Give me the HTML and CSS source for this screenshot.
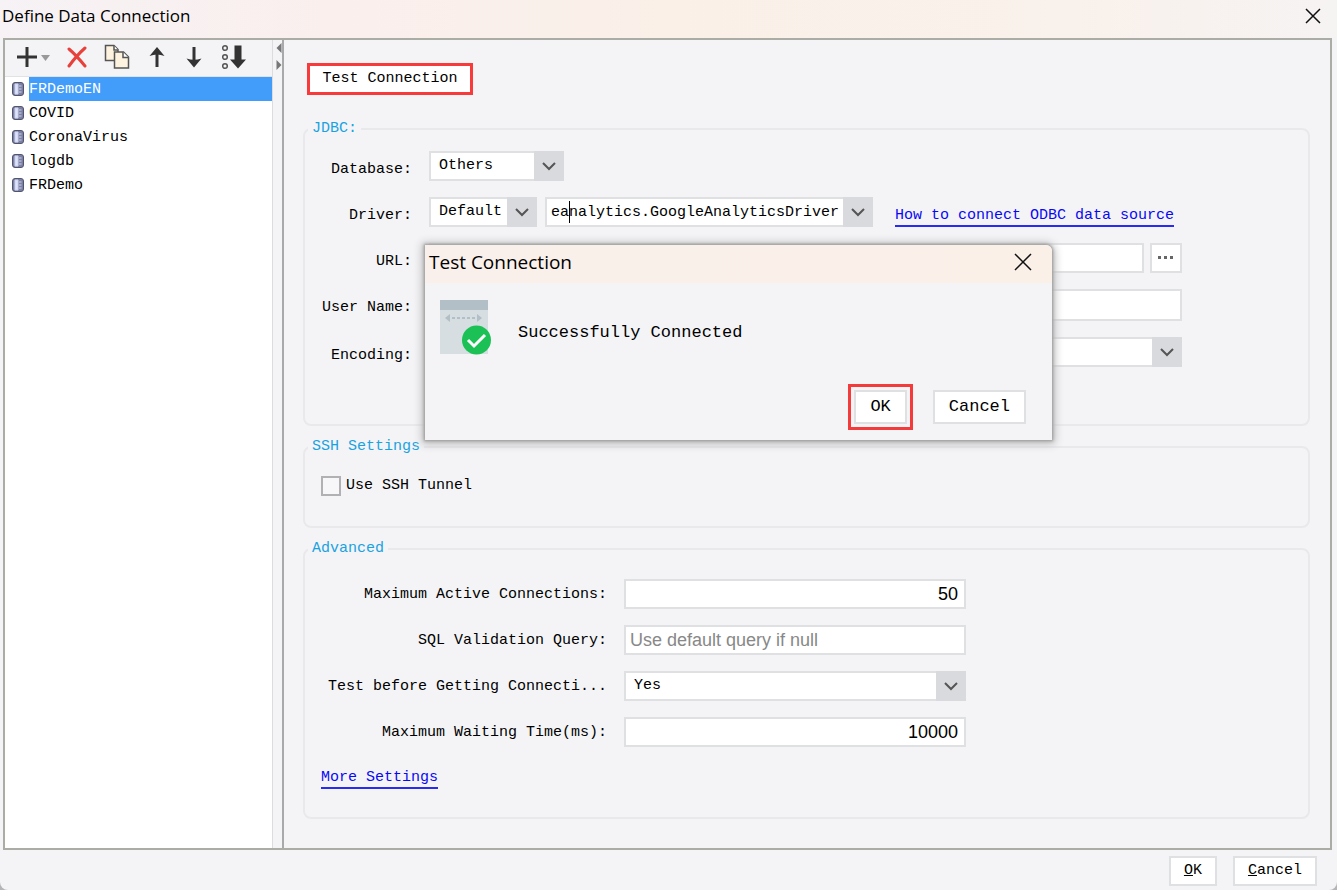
FILE: index.html
```html
<!DOCTYPE html>
<html lang="en">
<head>
<meta charset="UTF-8">
<title>Define Data Connection</title>
<link rel="stylesheet" href="styles.css">
</head>
<body>

<div class="window">
    <header class="titlebar">
        <h1>Define Data Connection</h1>
        <button type="button" class="close" aria-label="Close">
            <svg width="16" height="16" viewBox="0 0 16 16"><path d="M1 1L15 15M15 1L1 15"/></svg>
        </button>
    </header>

    <div class="panel">
        <!-- Connection list -->
        <aside class="sidebar">
            <div class="toolbar">
                <button type="button" aria-label="Add">
                    <svg width="34" height="26" viewBox="0 0 34 26"><path d="M1 13H21M11 3V23" stroke="#333" stroke-width="3"/><path d="M25 11H34L29.500 17Z" fill="#999"/></svg>
                </button>
                <button type="button" aria-label="Remove">
                    <svg width="20" height="26" viewBox="0 0 20 26"><path d="M2 5Q9 11 18 22M18 4Q10 11 2 22" stroke="#e8413b" stroke-width="3" stroke-linecap="round" fill="none"/></svg>
                </button>
                <button type="button" aria-label="Copy">
                    <svg width="26" height="26" viewBox="0 0 26 26" fill="#fdf3df" stroke="#555" stroke-width="1.500"><path d="M1.500 1.500H10L14 5.500V16.500H1.500Z"/><path d="M10 1.500V6H14" fill="#fff"/><path d="M10.500 8H19.500L24.500 13V24H10.500Z"/><path d="M19 8V13.500H24.500" fill="#fff"/></svg>
                </button>
                <button type="button" aria-label="Move up">
                    <svg width="20" height="26" viewBox="-2 0 20 26"><path d="M8 23V8" stroke="#333" stroke-width="3"/><path d="M8 3L15.500 12Q8 9 0.500 12Z" fill="#333"/></svg>
                </button>
                <button type="button" aria-label="Move down">
                    <svg width="20" height="26" viewBox="-2 0 20 26"><path d="M8 3V18" stroke="#333" stroke-width="3"/><path d="M8 23.500L0.500 14.500Q8 17 15.500 14.500Z" fill="#333"/></svg>
                </button>
                <button type="button" aria-label="Sort">
                    <svg width="26" height="26" viewBox="0 0 26 26"><g fill="none" stroke="#555" stroke-width="1.500"><circle cx="4" cy="4" r="2.300"/><circle cx="4" cy="13" r="2.300"/><circle cx="4" cy="22" r="2.300"/></g><path d="M13.500 1.500H20.500V15.500H25L17 24.500L9 15.500H13.500Z" fill="#333"/></svg>
                </button>
            </div>
            <ul class="connections">
                <li class="selected"><svg class="db" viewBox="0 0 12 14"><rect x="0.500" y="0.500" width="11" height="13" rx="2.500"/><path d="M3 2H6V12H3Z"/><path d="M7 4H9.500M7 7H9.500M7 10H9.500"/></svg><a href="#">FRDemoEN</a></li>
                <li><svg class="db" viewBox="0 0 12 14"><rect x="0.500" y="0.500" width="11" height="13" rx="2.500"/><path d="M3 2H6V12H3Z"/><path d="M7 4H9.500M7 7H9.500M7 10H9.500"/></svg><a href="#">COVID</a></li>
                <li><svg class="db" viewBox="0 0 12 14"><rect x="0.500" y="0.500" width="11" height="13" rx="2.500"/><path d="M3 2H6V12H3Z"/><path d="M7 4H9.500M7 7H9.500M7 10H9.500"/></svg><a href="#">CoronaVirus</a></li>
                <li><svg class="db" viewBox="0 0 12 14"><rect x="0.500" y="0.500" width="11" height="13" rx="2.500"/><path d="M3 2H6V12H3Z"/><path d="M7 4H9.500M7 7H9.500M7 10H9.500"/></svg><a href="#">logdb</a></li>
                <li><svg class="db" viewBox="0 0 12 14"><rect x="0.500" y="0.500" width="11" height="13" rx="2.500"/><path d="M3 2H6V12H3Z"/><path d="M7 4H9.500M7 7H9.500M7 10H9.500"/></svg><a href="#">FRDemo</a></li>
            </ul>
        </aside>

        <div class="splitter">
            <svg width="6" height="30" viewBox="0 0 6 30" fill="#777"><path d="M5.500 1V11L0.500 6Z"/><path d="M0.500 18V28L5.500 23Z"/></svg>
        </div>

        <!-- Connection settings -->
        <form class="settings">
            <button type="button" class="test">Test Connection</button>

            <fieldset>
                <legend>JDBC:</legend>
                <div class="rows jdbc">
                    <label for="database">Database:</label>
                    <div class="line">
                        <span class="select database"><select id="database"><option>Others</option></select><svg class="chevron" viewBox="0 0 30 30"><path d="M9 12L15 18L21 12"/></svg></span>
                    </div>

                    <label for="driver">Driver:</label>
                    <div class="line">
                        <span class="select driver"><select id="driver"><option>Default</option></select><svg class="chevron" viewBox="0 0 30 30"><path d="M9 12L15 18L21 12"/></svg></span>
                        <span class="combo">
                            <input type="text" aria-label="Driver class" value="eanalytics.GoogleAnalyticsDriver">
                            <button type="button" aria-label="Show drivers"><svg class="chevron" viewBox="0 0 30 30"><path d="M9 12L15 18L21 12"/></svg></button>
                            <span class="caret"></span>
                        </span>
                        <a class="link help" href="#">How to connect ODBC data source</a>
                    </div>

                    <label for="url">URL:</label>
                    <div class="line url">
                        <input type="text" id="url">
                        <button type="button" class="more" aria-label="Edit URL"><svg width="16" height="4" viewBox="0 0 16 4" fill="#666"><path d="M0 0H3V3H0ZM6 0H9V3H6ZM12 0H15V3H12Z"/></svg></button>
                    </div>

                    <label for="user">User Name:</label>
                    <input type="text" id="user" class="tall">

                    <label for="encoding">Encoding:</label>
                    <span class="select"><select id="encoding"><option></option></select><svg class="chevron" viewBox="0 0 30 30"><path d="M9 12L15 18L21 12"/></svg></span>
                </div>
            </fieldset>

            <fieldset>
                <legend>SSH Settings</legend>
                <div class="ssh">
                    <input type="checkbox" id="ssh"><label for="ssh">Use SSH Tunnel</label>
                </div>
            </fieldset>

            <fieldset>
                <legend>Advanced</legend>
                <div class="rows advanced">
                    <label for="active">Maximum Active Connections:</label>
                    <input type="text" id="active" class="number" value="50">

                    <label for="query">SQL Validation Query:</label>
                    <input type="text" id="query" class="query" placeholder="Use default query if null">

                    <label for="before">Test before Getting Connecti...</label>
                    <span class="select"><select id="before"><option>Yes</option></select><svg class="chevron" viewBox="0 0 30 30"><path d="M9 12L15 18L21 12"/></svg></span>

                    <label for="wait">Maximum Waiting Time(ms):</label>
                    <input type="text" id="wait" class="number" value="10000">
                </div>
                <div class="extra"><a class="link" href="#">More Settings</a></div>
            </fieldset>
        </form>
    </div>

    <footer class="footer">
        <button type="button"><u>O</u>K</button>
        <button type="button"><u>C</u>ancel</button>
    </footer>

    <!-- Result message -->
    <section class="message" role="dialog" aria-labelledby="message-title">
        <header>
            <h2 id="message-title">Test Connection</h2>
            <button type="button" class="close" aria-label="Close">
                <svg width="18" height="18" viewBox="0 0 18 18"><path d="M1 1L17 17M17 1L1 17"/></svg>
            </button>
        </header>
        <div class="result">
            <svg width="52" height="55" viewBox="0 0 52 55">
                <path d="M0 0H48V54H0Z" fill="#d6dee2"/>
                <path d="M0 0H48V10H0Z" fill="#b3bfc6"/>
                <path d="M12 18H37" stroke="#b3bfc6" stroke-width="2" stroke-dasharray="3 2"/>
                <path d="M10 14V22L5 18ZM37 14V22L42 18Z" fill="#b3bfc6"/>
                <circle cx="36.500" cy="40" r="14.500" fill="#1cc155"/>
                <path d="M28 40L34 46L45 35" stroke="#fff" stroke-width="3" fill="none"/>
            </svg>
            <p>Successfully Connected</p>
        </div>
        <div class="actions">
            <span class="highlight"><button type="button">OK</button></span>
            <button type="button">Cancel</button>
        </div>
    </section>
</div>

</body>
</html>
```
FILE: styles.css
```css
* { box-sizing: border-box; }

body {
    margin: 0;
    background: #b4b5b6; color: #000;
    font-family: "Liberation Mono", "Courier New", monospace; font-size: 15px; line-height: 22px;
}
button, input, select { font: inherit; color: inherit; margin: 0; }
h1, h2, p, ul { margin: 0; padding: 0; }
h1, h2 { font-family: "Open Sans", "Segoe UI", sans-serif; font-weight: normal; }

.window {
    position: relative; display: flex; flex-direction: column;
    min-height: 100vh; background: #f4f4f7;
    border-radius: 0 0 8px 8px;
}

.titlebar {
    display: flex; justify-content: space-between; align-items: center;
    height: 38px; padding: 0 16px 6px 2px;
    background: linear-gradient(90deg, #f6f2f5, #faefed 25%, #faf0e8 50%, #f9f1eb 80%, #f6f3f3);
}
    .titlebar h1 { font-size: 17px; }

.close { display: flex; padding: 0; border: 0; background: none; }
    .close path { stroke: #111; stroke-width: 1.500; }

.panel {
    display: flex; flex: 1;
    margin: 0 5px 0 3px;
    border: 2px solid #acaca6;
}

/* Left side */
.sidebar { display: flex; flex-direction: column; width: 267px; background: #fff; }

.toolbar {
    display: flex; gap: 17px; align-items: center;
    height: 37px; padding: 0 0 2px 11px;
    background: #f4f4f7; border-bottom: 1px solid #e2e2e4;
}
    .toolbar button { display: flex; padding: 0; border: 0; background: none; }

.connections { list-style: none; }
    .connections li { display: flex; align-items: center; height: 24px; padding-left: 7px; }
    .connections a { flex: 1; margin-left: 5px; padding-top: 2px; color: #000; text-decoration: none; }
    .connections .selected a { background: #429cfa; color: #fff; }

.db { width: 12px; height: 14px; }
    .db rect { fill: #7d82a5; stroke: #50546f; }
    .db path { fill: #dde3fa; stroke: #cdd3ee; }

.splitter {
    width: 12px; padding: 2px 0 0 3px;
    border-left: 1px solid #dcdcdf; border-right: 2px solid #a8a9aa;
}

/* Right side */
.settings { flex: 1; min-width: 0; padding: 23px 20px 20px 19px; }

.test {
    display: block; width: 166px; height: 32px; margin: 0 0 23px 4px; padding: 0;
    background: #fff; border: 3px solid #f93a3a;
}

fieldset {
    min-width: 0; margin: 0; padding: 0 5px 0 3px;
    border: 2px solid #e9e9ec; border-radius: 8px;
}
    fieldset + fieldset { margin-top: 10px; }
    legend { padding: 0 4px; height: 22px; color: #1aa2e0; }

.rows { display: grid; column-gap: 17px; row-gap: 16px; }
    .rows label { text-align: right; white-space: nowrap; }
.jdbc { grid-template-columns: 91px minmax(0, 753px); padding: 11px 0 57px 13px; }
    .jdbc label { padding-top: 8px; }
.advanced { grid-template-columns: 286px minmax(0, 342px); padding: 19px 0 0 13px; }
    .advanced label { padding-top: 5px; }

.line { display: flex; }

input[type="text"], select {
    width: 100%; min-width: 0; height: 30px; padding: 0 6px;
    background: #fff; border: 2px solid #dfe0e2; border-radius: 0; outline: 0;
}
select { grid-area: 1 / 1; padding: 0 8px; appearance: none; }
input.tall { height: 32px; }

.select { display: grid; }
    .select .chevron { grid-area: 1 / 1; justify-self: end; pointer-events: none; }
.chevron { display: block; width: 30px; height: 30px; background: #d9dadd; }
    .chevron path { fill: none; stroke: #555; stroke-width: 2; }

.database { width: 135px; }
.driver { width: 108px; }

.combo { position: relative; display: flex; width: 328px; margin-left: 8px; }
    .combo input[type="text"] { flex: 1; padding: 0 0 0 4px; border-right: 0; }
    .combo button { padding: 0; border: 0; background: none; }
    .caret { position: absolute; left: 24px; top: 4px; width: 1px; height: 22px; background: #000; }

.url { gap: 6px; }
.more {
    display: flex; flex: none; justify-content: center; align-items: center;
    width: 32px; height: 30px; padding: 0;
    background: #fff; border: 2px solid #dfe0e2;
}

.link { display: inline-block; height: 22px; color: #0808f5; text-decoration: none; border-bottom: 2px solid #2a2af6; }
.help { margin: 8px 0 0 22px; white-space: nowrap; }

.ssh { display: flex; align-items: center; gap: 5px; padding: 17px 0 29px 13px; }
    .ssh input {
        width: 20px; height: 20px; appearance: none;
        background: #f7f7f9; border: 2px solid #b1b1b3;
    }

.number, .query { font-family: "Liberation Sans", Arial, sans-serif; font-size: 18px; }
.number { text-align: right; }
input.query { padding-left: 4px; }
    .query::placeholder { color: #888; }
.extra { padding: 20px 0 28px 13px; }

.footer { display: flex; justify-content: flex-end; gap: 16px; padding: 6px 20px 4px; }
    .footer button { height: 30px; padding: 0 13px; background: #fff; border: 2px solid #dfe0e2; }

/* Result message */
.message {
    position: absolute; left: 425px; top: 245px; width: 627px;
    background: #f4f4f7; border-radius: 0 6px 0 0;
    box-shadow: 0 0 3px 1px #999, 0 1px 8px 3px #bbb;
    font-size: 17px;
}
    .message header {
        display: flex; justify-content: space-between; align-items: center;
        height: 38px; padding: 0 20px 4px 4px;
        background: linear-gradient(90deg, #faf0eb, #faf0e8);
        border-radius: 0 6px 0 0;
    }
    .message h2 { font-size: 19px; }

.result { display: flex; gap: 26px; padding: 17px 15px 0; }
    .result p { padding-top: 22px; }

.actions { display: flex; justify-content: flex-end; align-items: center; gap: 20px; padding: 29px 26px 10px; }
    .actions button { height: 34px; padding: 0 14px; background: #fff; border: 2px solid #dfe0e2; }
    .highlight { padding: 3px; border: 3px solid #f33b3b; }
```
